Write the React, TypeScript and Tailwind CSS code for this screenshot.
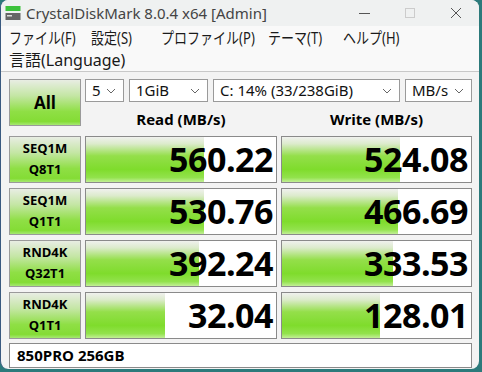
import React from 'react';

type Row = { l1: string; l2: string; read: string; write: string; rw: number; ww: number };

const rows: Row[] = [
  { l1: 'SEQ1M', l2: 'Q8T1', read: '560.22', write: '524.08', rw: 118, ww: 118 },
  { l1: 'SEQ1M', l2: 'Q1T1', read: '530.76', write: '466.69', rw: 118, ww: 116 },
  { l1: 'RND4K', l2: 'Q32T1', read: '392.24', write: '333.53', rw: 113, ww: 111 },
  { l1: 'RND4K', l2: 'Q1T1', read: '32.04', write: '128.01', rw: 79, ww: 98 },
];

const menu: [string, string][] = [
  ['ファイル(F)', 'w-[82px]'],
  ['設定(S)', 'w-[70px]'],
  ['プロファイル(P)', 'w-[107px]'],
  ['テーマ(T)', 'w-[75px]'],
  ['ヘルプ(H)', 'w-[70px]'],
];

const ui = { fontFamily: '"Noto Sans", "Noto Sans CJK JP", sans-serif' };
const bold = { fontFamily: '"Open Sans", "Noto Sans", sans-serif' };

const labelBg =
  'bg-[linear-gradient(to_bottom,#e8ede3_0%,#c4e6a4_35%,#8fdf45_70%,#84dc35_92%,#a6e872_100%)]';
const fillBg =
  'bg-[linear-gradient(to_bottom,#f0f1ee_0%,#dcebcc_15%,#94df4a_42%,#7fdc2c_72%,#92e24c_90%,#c2ef96_100%)]';

const Chevron = () => (
  <svg width="10" height="6" viewBox="0 0 10 6" className="shrink-0">
    <path d="M1 1l4 4 4-4" fill="none" stroke="#666" strokeWidth="1" />
  </svg>
);

const Select: React.FC<{ text: string; w: string }> = ({ text, w }) => (
  <div className={`${w} h-[23px] bg-white border border-[#9a9a9a] flex items-center justify-between pl-[6px] pr-[7px] text-[15px] text-[#111]`} style={ui}>
    <span className="leading-none">{text}</span>
    <Chevron />
  </div>
);

const Cell: React.FC<{ value: string; fill: number }> = ({ value, fill }) => (
  <div className="relative h-[47px] bg-white border border-[#8a8a8a] overflow-hidden">
    <div className={`absolute left-0 top-0 bottom-0 ${fillBg}`} style={{ width: fill }} />
    <div className="relative h-full flex items-center justify-end pr-[3px] text-[34px] font-bold text-black leading-none tracking-[-0.5px]" style={bold}>
      {value}
    </div>
  </div>
);

const Label: React.FC<{ l1: string; l2: string }> = ({ l1, l2 }) => (
  <div className={`h-[47px] border border-[#9a9a9a] ${labelBg} flex flex-col items-center justify-center text-[13px] font-bold text-black leading-[21px]`} style={bold}>
    <span>{l1}</span>
    <span>{l2}</span>
  </div>
);

export default function App() {
  return (
    <div className="w-[482px] h-[372px] bg-[#2c7a7b] overflow-hidden">
      <div className="w-[479px] h-[369px] bg-[#f3f3f3] rounded-[8px] overflow-hidden border-l border-[#3a5a80] flex flex-col">
        {/* title bar */}
        <div className="h-[26px] flex items-center bg-[#eff1f1]" style={ui}>
          <svg width="16" height="16" viewBox="0 0 16 16" className="ml-[4px] mr-[5px]">
            <rect x="0.5" y="1" width="15" height="5" fill="#3cc23c" />
            <rect x="0.5" y="8" width="15" height="7" fill="#666" />
            <rect x="2" y="10" width="5" height="1.5" fill="#ddd" />
          </svg>
          <span className="text-[15px] text-[#444] leading-none">CrystalDiskMark 8.0.4 x64 [Admin]</span>
          <div className="flex-1" />
          <div className="w-[46px] flex justify-center">
            <div className="w-[11px] h-px bg-[#555]" />
          </div>
          <div className="w-[46px] flex justify-center">
            <div className="w-[10px] h-[10px] border border-[#ccc]" />
          </div>
          <div className="w-[46px] flex justify-center">
            <svg width="12" height="12" viewBox="0 0 12 12">
              <path d="M1 1l10 10M11 1L1 11" stroke="#555" strokeWidth="1" />
            </svg>
          </div>
        </div>
        {/* menu */}
        <div className="bg-[#f9f9f9] border-b border-[#c8c8c8] pl-[8px] pt-[1px] text-[16px] text-[#1a1a1a] leading-[22px]" style={ui}>
          <div className="flex text-[15.5px]">
            {menu.map(([t, w]) => (
              <span key={t} className={`${w} shrink-0 whitespace-nowrap`}>
                <span className="inline-block scale-x-[0.84] origin-left">{t}</span>
              </span>
            ))}
          </div>
          <div>言語(Language)</div>
        </div>
        {/* body */}
        <div className="px-[8px] pt-[7px] grid grid-cols-[72px_192px_191px] gap-x-[4px] gap-y-[5px]">
          <div className={`h-[47px] border border-[#9a9a9a] ${labelBg} flex items-center justify-center text-[17px] font-bold text-black`} style={bold}>
            All
          </div>
          <div className="col-span-2 flex flex-col">
            <div className="flex gap-[5px]">
              <Select text="5" w="w-[39px]" />
              <Select text="1GiB" w="w-[79px]" />
              <Select text="C: 14% (33/238GiB)" w="w-[187px]" />
              <Select text="MB/s" w="w-[67px]" />
            </div>
            <div className="flex-1 pt-[6px] grid grid-cols-[192px_191px] gap-x-[4px] items-center text-[15px] font-bold text-black" style={bold}>
              <div className="text-center">Read (MB/s)</div>
              <div className="text-center">Write (MB/s)</div>
            </div>
          </div>
          {rows.map((r, i) => (
            <React.Fragment key={i}>
              <Label l1={r.l1} l2={r.l2} />
              <Cell value={r.read} fill={r.rw} />
              <Cell value={r.write} fill={r.ww} />
            </React.Fragment>
          ))}
          <div className="col-span-3 h-[25px] -mt-px bg-white border border-[#8a8a8a] flex items-center pl-[7px] text-[15px] font-bold text-black" style={bold}>
            850PRO 256GB
          </div>
        </div>
      </div>
    </div>
  );
}
